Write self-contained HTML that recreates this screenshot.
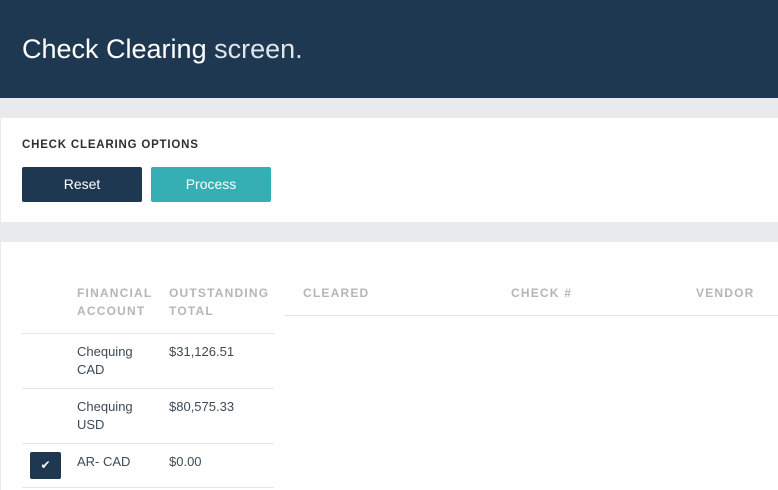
<!DOCTYPE html>
<html><head><style>
body{margin:0;width:778px;height:490px;overflow:hidden;background:#e9eaec;font-family:"Liberation Sans",sans-serif;position:relative}
.hdr{position:absolute;left:0;top:0;width:778px;height:98px;background:#1f3852;color:#fff}
.hdr h1{position:absolute;left:22px;top:34px;margin:0;font-size:27px;font-weight:normal;letter-spacing:0}
.hdr h1 span{font-weight:300;color:#dfe5ec}
.card{position:absolute;left:1px;width:777px;background:#fff}
.t{position:absolute;font-size:13px;color:#3d4a55;line-height:18px}
.h{position:absolute;font-size:12px;font-weight:bold;color:#b4b6b8;letter-spacing:1.2px;line-height:18px}
.btn{position:absolute;top:167px;width:120px;height:35px;border-radius:2px;color:#fff;font-size:14px;text-align:center;line-height:35px}
.ln{position:absolute;height:1px;background:#e3e4e5}
</style></head><body>
<div class="hdr"><h1>Check Clearing <span>screen.</span></h1></div>
<div class="card" style="top:118px;height:104px"></div>
<div style="position:absolute;left:22px;top:139px;font-size:11.5px;font-weight:bold;color:#2d2f33;letter-spacing:0.8px">CHECK CLEARING OPTIONS</div>
<div class="btn" style="left:22px;background:#1f3852">Reset</div>
<div class="btn" style="left:151px;background:#35afb3">Process</div>
<div class="card" style="top:242px;height:248px"></div>
<div class="h" style="left:77px;top:284px">FINANCIAL<br>ACCOUNT</div>
<div class="h" style="left:169px;top:284px">OUTSTANDING<br>TOTAL</div>
<div class="h" style="left:303px;top:284px">CLEARED</div>
<div class="h" style="left:511px;top:284px">CHECK #</div>
<div class="h" style="left:696px;top:284px">VENDOR</div>
<div class="ln" style="left:285px;top:315px;width:493px"></div>
<div class="ln" style="left:22px;top:333px;width:252px"></div>
<div class="ln" style="left:22px;top:388px;width:252px"></div>
<div class="ln" style="left:22px;top:443px;width:252px"></div>
<div class="ln" style="left:22px;top:487px;width:252px"></div>
<div class="t" style="left:77px;top:343px">Chequing<br>CAD</div>
<div class="t" style="left:169px;top:343px">$31,126.51</div>
<div class="t" style="left:77px;top:398px">Chequing<br>USD</div>
<div class="t" style="left:169px;top:398px">$80,575.33</div>
<div class="t" style="left:77px;top:453px">AR- CAD</div>
<div class="t" style="left:169px;top:453px">$0.00</div>
<div style="position:absolute;left:30px;top:452px;width:31px;height:27px;background:#1f3852;border-radius:2px;color:#fff;font-size:12px;text-align:center;line-height:27px">✔</div>
</body></html>
